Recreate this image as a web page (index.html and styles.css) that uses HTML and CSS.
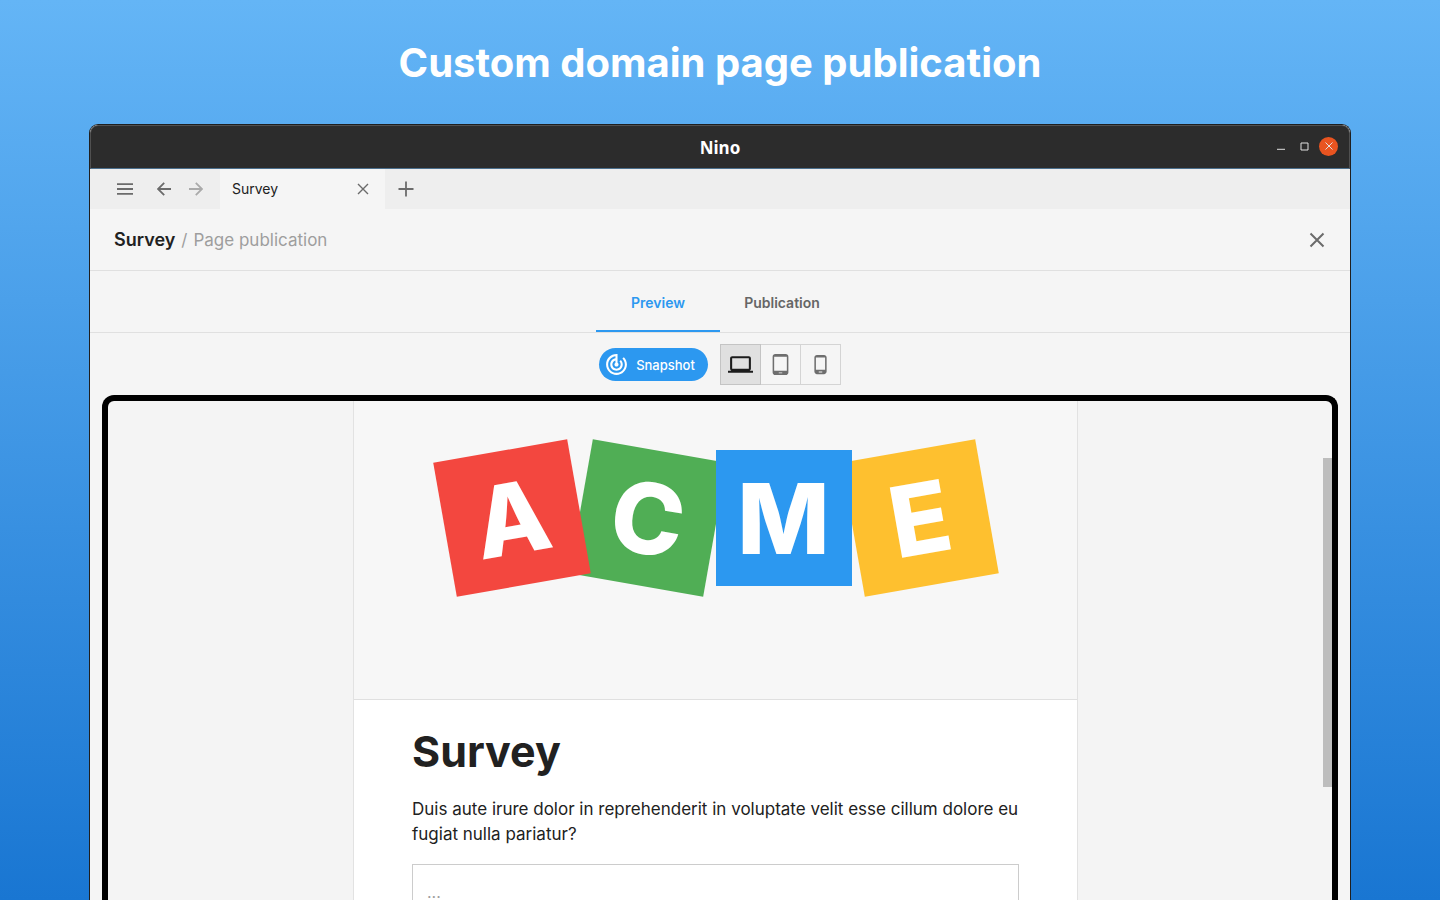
FILE: index.html
```
<!DOCTYPE html>
<html lang="en">
<head>
  <meta charset="UTF-8" />
  <meta name="viewport" content="width=device-width, initial-scale=1.0" />
  <title>Nino - Custom domain page publication</title>
  <link rel="stylesheet" href="styles.css">
</head>
<body>

  <h1 class="headline">Custom domain page publication</h1>

  <div class="window">
    <header class="titlebar">
      <span class="title">Nino</span>
      <div class="window-buttons">
        <button aria-label="Minimize"><svg width="8" height="8" viewBox="0 0 8 8"><path d="M0 7.3h8" /></svg></button>
        <button aria-label="Maximize"><svg width="9" height="9" viewBox="0 0 9 9"><path d="M1 1h7v7h-7z" /></svg></button>
        <button class="quit" aria-label="Close window"><svg width="8" height="8" viewBox="0 0 8 8"><path d="M.5.5l7 7M7.5.5l-7 7" /></svg></button>
      </div>
    </header>

    <nav class="tabbar">
      <button class="icon-btn menu" aria-label="Menu"><svg width="16" height="12" viewBox="0 0 16 12"><path d="M0 1.2h16M0 6h16M0 10.8h16" /></svg></button>
      <button class="icon-btn" aria-label="Back"><svg width="14" height="14" viewBox="0 0 14 14"><path d="M14 7H1M7.2.8L1 7l6.2 6.2" /></svg></button>
      <button class="icon-btn forward" aria-label="Forward" disabled><svg width="14" height="14" viewBox="0 0 14 14"><path d="M0 7h13M6.8.8L13 7l-6.2 6.2" /></svg></button>
      <div class="file-tab">
        <span>Survey</span>
        <button class="icon-btn thin" aria-label="Close tab"><svg width="12" height="12" viewBox="0 0 12 12"><path d="M1 1l10 10M11 1L1 11" /></svg></button>
      </div>
      <button class="icon-btn add" aria-label="New tab"><svg width="16" height="16" viewBox="0 0 16 16"><path d="M8 .5v15M.5 8h15" /></svg></button>
    </nav>

    <div class="breadcrumb">
      <a href="#" class="crumb">Survey</a>
      <span class="slash">/</span>
      <span class="current">Page publication</span>
      <button class="icon-btn close" aria-label="Close"><svg width="16" height="16" viewBox="0 0 16 16"><path d="M1.5 1.5l13 13M14.5 1.5l-13 13" /></svg></button>
    </div>

    <div class="tabs" role="tablist">
      <button class="tab active" role="tab" aria-selected="true">Preview</button>
      <button class="tab" role="tab" aria-selected="false">Publication</button>
    </div>

    <div class="toolbar">
      <button class="snapshot">
        <svg width="25" height="25" viewBox="0 0 24 24"><path d="M19.07 4.93l-1.41 1.41C19.1 7.79 20 9.79 20 12c0 4.42-3.58 8-8 8s-8-3.58-8-8c0-4.08 3.05-7.44 7-7.93v2.02C8.16 6.57 6 9.03 6 12c0 3.31 2.69 6 6 6s6-2.69 6-6c0-1.66-.67-3.16-1.76-4.24l-1.41 1.41C15.55 9.9 16 10.9 16 12c0 2.21-1.79 4-4 4s-4-1.79-4-4c0-1.86 1.28-3.41 3-3.86v2.14c-.6.35-1 .98-1 1.72 0 1.1.9 2 2 2s2-.9 2-2c0-.74-.4-1.38-1-1.72V2h-1C6.48 2 2 6.48 2 12s4.48 10 10 10 10-4.48 10-10c0-2.76-1.12-5.26-2.93-7.07z" /></svg>
        Snapshot
      </button>
      <div class="devices">
        <button class="device selected" aria-label="Laptop"><svg width="25" height="25" viewBox="0 0 24 24"><path d="M20 18c1.1 0 1.99-.9 1.99-2L22 6c0-1.1-.9-2-2-2H4c-1.1 0-2 .9-2 2v10c0 1.1.9 2 2 2H0v2h24v-2h-4zM4 6h16v10H4V6z" /></svg></button>
        <button class="device" aria-label="Tablet"><svg width="21" height="21" viewBox="0 0 24 24"><path d="M18 0H6C4.34 0 3 1.34 3 3v18c0 1.66 1.34 3 3 3h12c1.66 0 3-1.34 3-3V3c0-1.66-1.34-3-3-3zm-4 22h-4v-1h4v1zm5.25-3H4.75V3h14.5v16z" /></svg></button>
        <button class="device" aria-label="Phone"><svg width="21" height="21" viewBox="0 0 24 24"><path d="M16 1H8C6.34 1 5 2.34 5 4v16c0 1.66 1.34 3 3 3h8c1.66 0 3-1.34 3-3V4c0-1.66-1.34-3-3-3zm-2 20h-4v-1h4v1zm3.25-3H6.75V4h10.5v14z" /></svg></button>
      </div>
    </div>

    <main class="screen">
      <div class="canvas">
        <article class="page">
          <div class="banner">
            <div class="logo">
              <span class="tile red">A</span>
              <span class="tile green">C</span>
              <span class="tile blue">M</span>
              <span class="tile yellow">E</span>
            </div>
          </div>
          <form class="form">
            <h2>Survey</h2>
            <label for="answer">Duis aute irure dolor in reprehenderit in voluptate velit esse cillum dolore eu fugiat nulla pariatur?</label>
            <textarea id="answer" placeholder="..."></textarea>
          </form>
        </article>
      </div>
      <div class="scrollbar"><div class="thumb"></div></div>
    </main>
  </div>

</body>
</html>
```
FILE: styles.css
```
* {
  box-sizing: border-box;
}

body {
  margin: 0;
  height: 100vh;
  overflow: hidden;
  display: flex;
  flex-direction: column;
  font-family: Inter, sans-serif;
  color: #212121;
  background: linear-gradient(#64b5f6, #1976d2);
}

button {
  font-family: inherit;
  border: none;
  background: none;
  padding: 0;
  cursor: pointer;
}

svg {
  display: block;
  fill: currentColor;
}

.headline {
  margin: 0;
  padding-top: 38px;
  height: 124px;
  flex: none;
  font-size: 40px;
  line-height: 50px;
  font-weight: 700;
  text-align: center;
  color: #fff;
}

.window {
  flex: 1;
  min-height: 0;
  margin: 0 89px;
  display: flex;
  flex-direction: column;
  border: 1px solid #1f1f1f;
  border-bottom: none;
  border-radius: 9px 9px 0 0;
  background: #f5f5f5;
  overflow: hidden;
}

/* title bar */
.titlebar {
  height: 44px;
  flex: none;
  display: grid;
  grid-template-columns: 1fr auto 1fr;
  align-items: center;
  padding: 0 11px 2px;
  background: #2c2c2c;
  border: 1px solid #505050;
  border-bottom-color: #4b6f8d;
  border-radius: 8px 8px 0 0;
  color: #fff;
}

.title {
  grid-column: 2;
  padding-top: 2px;
  font-family: "Noto Sans", sans-serif;
  font-size: 17px;
  font-weight: 700;
}

.window-buttons {
  display: flex;
  justify-content: flex-end;
  gap: 5px;
}

.window-buttons button {
  width: 19px;
  height: 19px;
  display: grid;
  place-items: center;
  border-radius: 50%;
}

.window-buttons svg {
  fill: none;
  stroke: #e0e0e0;
}

.window-buttons .quit {
  background: #e95420;
}

/* file tabs */
.tabbar {
  height: 40px;
  flex: none;
  display: flex;
  align-items: center;
  padding-left: 27px;
  background: #eee;
}

.icon-btn {
  color: #6b6b6b;
}

.icon-btn svg {
  fill: none;
  stroke: currentColor;
  stroke-width: 2;
}

.tabbar .icon-btn svg {
  stroke-width: 1.8;
}

.menu {
  margin-right: 24px;
}

.forward {
  margin: 0 17px 0 18px;
}

.forward:disabled {
  color: #aaa;
}

.file-tab {
  width: 165px;
  height: 40px;
  display: flex;
  align-items: center;
  justify-content: space-between;
  padding: 0 16px 1px 12px;
  background: #f5f5f5;
  font-size: 14px;
}

.tabbar .thin svg {
  stroke-width: 1.4;
}

.add {
  margin-left: 13px;
}

/* breadcrumb */
.breadcrumb {
  height: 62px;
  flex: none;
  display: flex;
  align-items: center;
  gap: 6px;
  padding: 0 25px 0 24px;
  border-bottom: 1px solid #e0e0e0;
  font-size: 17px;
  color: #9e9e9e;
}

.crumb {
  font-size: 18px;
  font-weight: 600;
  color: #212121;
  text-decoration: none;
}

.close {
  margin-left: auto;
}

/* tabs */
.tabs {
  height: 62px;
  flex: none;
  display: flex;
  justify-content: center;
  border-bottom: 1px solid #e0e0e0;
}

.tab {
  width: 124px;
  padding-top: 4px;
  border-bottom: 2px solid transparent;
  font-size: 14px;
  font-weight: 600;
  color: #666;
}

.tab.active {
  color: #2c98f0;
  border-bottom-color: #2c98f0;
}

/* toolbar */
.toolbar {
  flex: none;
  display: flex;
  align-items: center;
  justify-content: center;
  gap: 12px;
  padding: 11px 0 10px;
}

.snapshot {
  height: 33px;
  display: flex;
  align-items: center;
  gap: 7px;
  padding: 0 13px 0 5px;
  border-radius: 17px;
  background: #2c98f0;
  color: #fff;
  font-size: 13px;
  font-weight: 500;
}

.devices {
  display: flex;
}

.device {
  width: 41px;
  height: 41px;
  display: grid;
  place-items: center;
  border: 1px solid #d4d4d4;
  color: #6e6e6e;
}

.device + .device {
  border-left: none;
  width: 40px;
}

.device.selected {
  border-color: #c4c4c4;
  background: #e0e0e0;
  color: #1c1c1c;
}

/* preview screen */
.screen {
  flex: 1;
  min-height: 0;
  display: flex;
  margin: 0 12px;
  border: 6px solid #000;
  border-bottom: none;
  border-radius: 12px 12px 0 0;
  background: #f4f4f4;
  overflow: hidden;
}

.canvas {
  flex: 1;
  overflow: hidden;
}

.page {
  max-width: 725px;
  margin: 0 auto;
  border: 1px solid #e2e2e2;
  border-width: 0 1px;
  background: #fff;
}

.banner {
  padding: 49px 0 113px;
  background: #f7f7f7;
  border-bottom: 1px solid #e0e0e0;
}

.logo {
  display: flex;
  justify-content: center;
}

.tile {
  width: 136px;
  height: 136px;
  display: grid;
  place-items: center;
  padding-top: 2px;
  font-size: 98px;
  font-weight: 800;
  line-height: 1;
  color: #fff;
}

.red {
  background: #f3473f;
  transform: rotate(-10deg);
  z-index: 1;
}

.green {
  background: #50ae55;
  transform: rotate(10deg);
}

.blue {
  background: #2c98f0;
  z-index: 2;
}

.yellow {
  background: #fec02f;
  transform: rotate(-10deg);
}

.form {
  padding: 24px 58px;
}

.form h2 {
  margin: 0 0 18px;
  font-size: 43px;
  line-height: 54px;
  font-weight: 700;
}

.form label {
  display: block;
  padding-top: 1px;
  font-size: 17px;
  line-height: 25px;
}

.form textarea {
  display: block;
  width: 100%;
  height: 120px;
  margin-top: 17px;
  padding: 17px 14px;
  border: 1px solid #ccc;
  font-family: inherit;
  font-size: 16px;
  resize: none;
}

.form textarea::placeholder {
  color: #9e9e9e;
}

.scrollbar {
  width: 9px;
  padding-top: 57px;
}

.thumb {
  height: 329px;
  background: #bdbdbd;
}
```
